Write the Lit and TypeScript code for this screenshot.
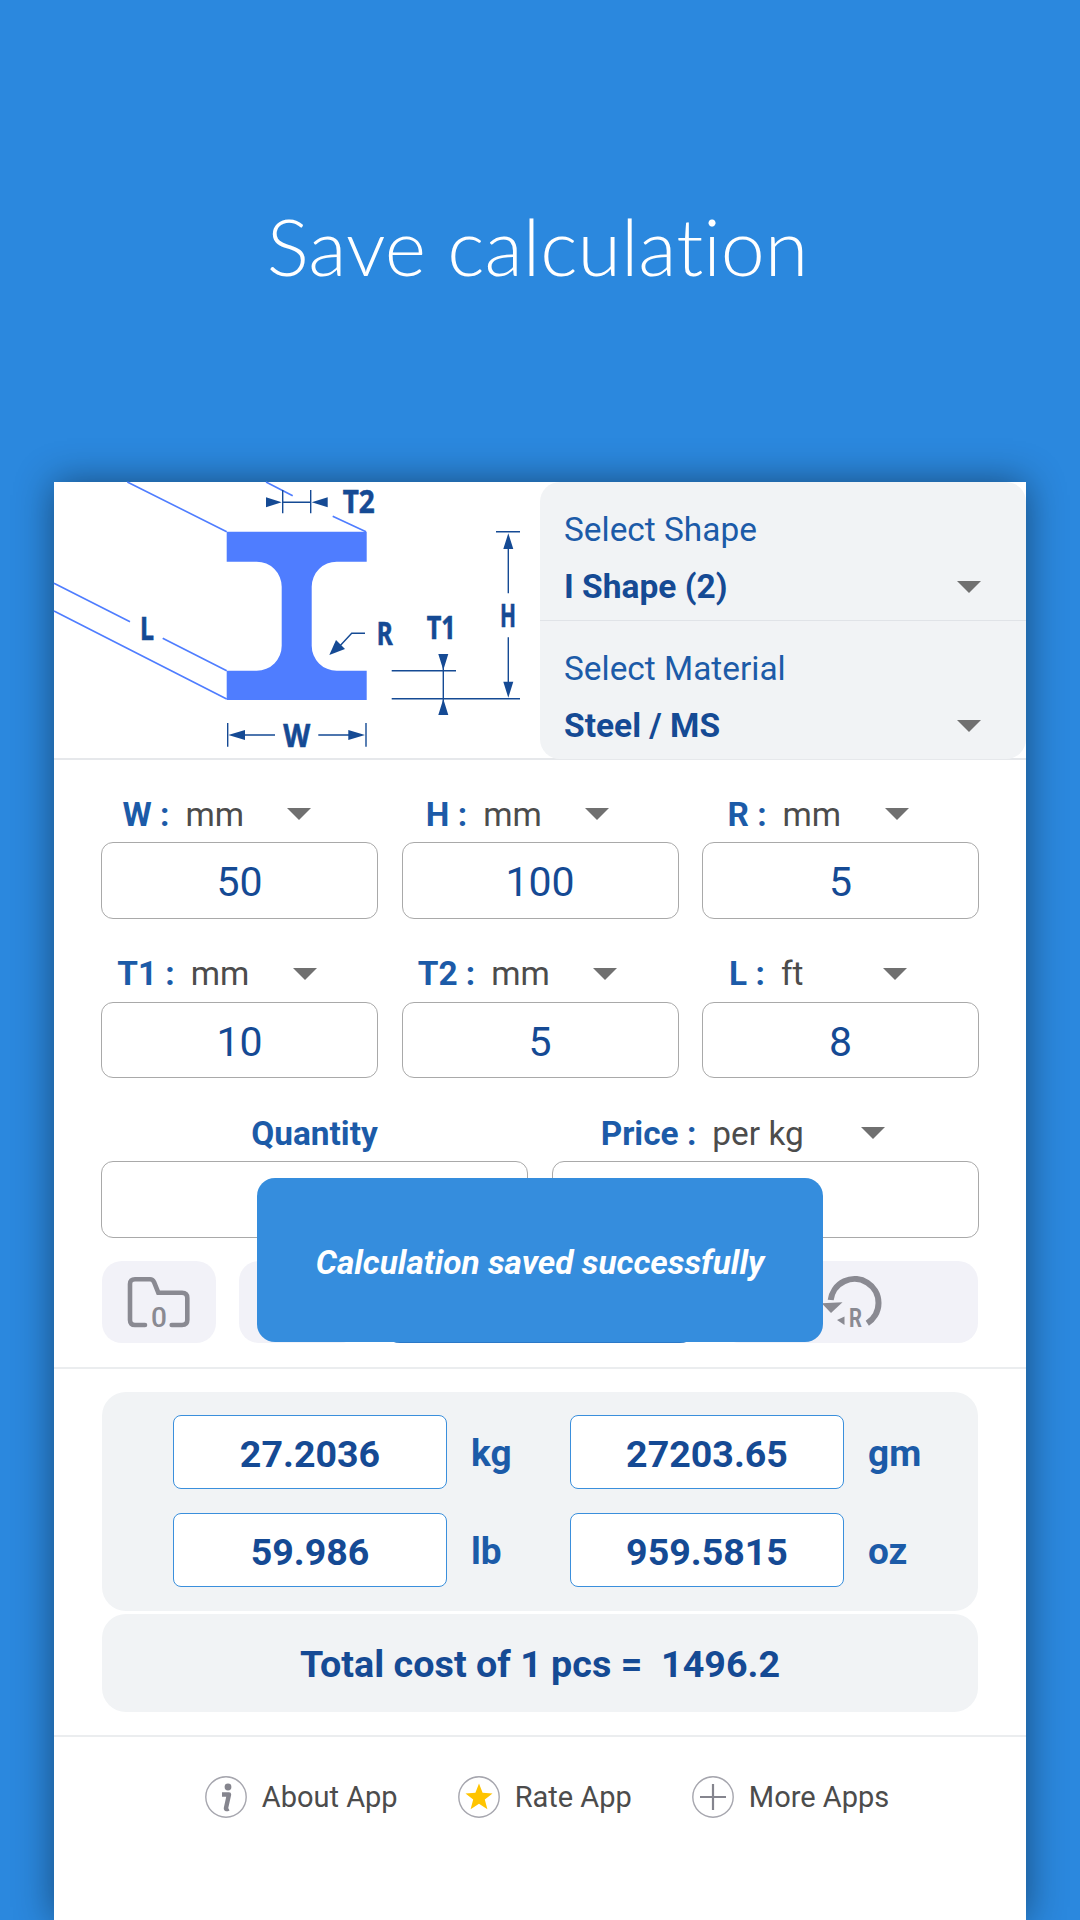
import {html, css, LitElement} from 'lit';
import {customElement} from 'lit/decorators.js';

const dims = [
  {label: 'W', unit: 'mm', value: '50'},
  {label: 'H', unit: 'mm', value: '100'},
  {label: 'R', unit: 'mm', value: '5'},
  {label: 'T1', unit: 'mm', value: '10'},
  {label: 'T2', unit: 'mm', value: '5'},
  {label: 'L', unit: 'ft', value: '8'},
];

const results = [
  {value: '27.2036', unit: 'kg'},
  {value: '27203.65', unit: 'gm'},
  {value: '59.986', unit: 'lb'},
  {value: '959.5815', unit: 'oz'},
];

@customElement('app-root')
export class AppRoot extends LitElement {
  static styles = css`
    :host {
      display: block;
      width: 1080px;
      height: 1920px;
      overflow: hidden;
      background: #2b88de;
      font-family: Roboto, sans-serif;
      color: #154a94;
    }
    .title {
      height: 482px;
      box-sizing: border-box;
      padding: 194px 5px 0 0;
      margin: 0;
      text-align: center;
      color: #fff;
      font-family: Lato, sans-serif;
      font-weight: 300;
      font-size: 79px;
      line-height: 104px;
      font-variant-ligatures: none;
    }
    .card {
      position: relative;
      width: 972px;
      height: 1438px;
      margin-left: 54px;
      background: #fff;
      box-shadow: 0 0 36px rgba(0, 0, 0, 0.45);
    }
    .top {
      display: flex;
      height: 278px;
      box-sizing: border-box;
      border-bottom: 2px solid #e6e8eb;
    }
    .diagram {
      display: block;
      width: 486px;
      height: 276px;
      flex: none;
      overflow: visible;
    }
    .diagram text {
      font-family: 'Noto Sans', sans-serif;
      font-weight: 700;
      fill: #154a94;
      stroke: #154a94;
      stroke-width: 0.6px;
    }
    .selects {
      flex: 1;
      height: 277px;
      background: #f1f3f5;
      border-radius: 20px;
      display: flex;
      flex-direction: column;
    }
    .select {
      height: 138px;
      box-sizing: border-box;
      padding: 26px 45px 0 24px;
    }
    .select + .select {
      flex: 1;
      border-top: 1px solid #e0e3e7;
    }
    .select-label {
      font-size: 33.4px;
      line-height: 44px;
      color: #1c5ba8;
    }
    .select-row {
      display: flex;
      justify-content: space-between;
      align-items: center;
      margin-top: 13px;
      font-size: 33.5px;
      line-height: 44px;
      font-weight: 700;
      color: #154a94;
    }
    .arrow {
      flex: none;
      width: 0;
      height: 0;
      border-left: 12px solid transparent;
      border-right: 12px solid transparent;
      border-top: 12px solid #707070;
    }
    .fields {
      display: grid;
      grid-template-columns: repeat(3, 277px);
      gap: 33px 23.5px;
      padding: 32px 47px 0;
    }
    .wide {
      display: grid;
      grid-template-columns: repeat(2, 427px);
      column-gap: 24px;
      padding: 33px 47px 0;
    }
    .field-label {
      display: flex;
      align-items: center;
      justify-content: center;
      height: 44px;
      padding-right: 45px;
      margin-bottom: 6px;
      font-size: 33.4px;
      font-weight: 700;
      color: #1c5ba8;
    }
    .field-label.plain {
      padding-right: 0;
    }
    .unit {
      width: 102px;
      margin-left: 16px;
      font-weight: 400;
      font-size: 33.4px;
      color: #4c4c4c;
    }
    .unit.long {
      width: 149px;
    }
    .box {
      height: 76.5px;
      box-sizing: border-box;
      padding-top: 2px;
      border: 1px solid #a9a9a9;
      border-radius: 12px;
      background: #fff;
      text-align: center;
      font-size: 41px;
      line-height: 75px;
      color: #154a94;
    }
    .buttons {
      display: flex;
      gap: 20px;
      height: 82px;
      margin-top: 23.5px;
      padding: 0 48px;
    }
    .btn {
      display: flex;
      align-items: center;
      justify-content: center;
      background: #f2f2f8;
      border-radius: 20px;
    }
    .folder {
      width: 114px;
      flex: none;
      margin-right: 3px;
    }
    .other {
      width: 121px;
      flex: none;
    }
    .save {
      width: 320px;
      flex: none;
      background: #2a78c8;
    }
    .reset {
      flex: 1;
      padding-left: 10px;
    }
    .btn svg {
      display: block;
      overflow: visible;
    }
    .btn text {
      font-family: Roboto, sans-serif;
      fill: #8a8a92;
    }
    .output {
      margin-top: 24px;
      padding: 23px 48px 23px;
      border-top: 2px solid #ebedef;
      border-bottom: 2px solid #ebedef;
    }
    .weights {
      display: grid;
      grid-template-columns: 274px 123px 274px 1fr;
      grid-auto-rows: 74px;
      gap: 24px 0;
      align-items: center;
      height: 219px;
      box-sizing: border-box;
      padding: 23px 0 0 71px;
      background: #f1f3f5;
      border-radius: 24px;
    }
    .result {
      height: 74px;
      box-sizing: border-box;
      padding-top: 3px;
      border: 1px solid #3a8fdc;
      border-radius: 8px;
      background: #fff;
      text-align: center;
      font-size: 37.6px;
      font-weight: 700;
      line-height: 70px;
    }
    .weight-unit {
      padding: 2px 0 0 24px;
      font-size: 37px;
      font-weight: 700;
      color: #1c5ba8;
    }
    .total {
      height: 98px;
      margin-top: 3px;
      background: #f1f3f5;
      border-radius: 24px;
      text-align: center;
      font-size: 37.7px;
      font-weight: 700;
      line-height: 101px;
      white-space: pre;
    }
    .footer {
      display: flex;
      justify-content: center;
      align-items: center;
      gap: 60px;
      padding: 39px 0 0 14px;
      font-size: 29px;
      color: #4c4c4c;
    }
    .link {
      display: flex;
      align-items: center;
      gap: 15px;
    }
    .link svg {
      display: block;
    }
    .toast {
      position: absolute;
      left: 203px;
      top: 696px;
      width: 566px;
      height: 164px;
      box-sizing: border-box;
      padding-top: 4px;
      border-radius: 18px;
      background: #358ddd;
      display: flex;
      align-items: center;
      justify-content: center;
      color: #fff;
      font-size: 33.4px;
      font-weight: 700;
      font-style: italic;
    }
  `;

  renderDiagram() {
    return html`
      <svg class="diagram" viewBox="0 0 486 276">
        <g stroke="#4f7dff" stroke-width="1.6" fill="none">
          <path d="M73.3 0L172.7 49.7M212 0L238.7 13.7M278.7 34.3L312 49.7M0 101.3L76 139.7M108.7 156.3L172.7 188.7M0 129L172.7 217"/>
        </g>
        <path fill="#4f7dff" d="M172.7 49.7H312.7V79.7H282.7A25 25 0 0 0 257.7 104.7V163.7A25 25 0 0 0 282.7 188.7H312.7V218H172.7V188.7H202.7A25 25 0 0 0 227.7 163.7V104.7A25 25 0 0 0 202.7 79.7H172.7Z"/>
        <g stroke="#154a94" stroke-width="1.4" fill="none">
          <path d="M228.7 8V31.3M256.7 8V31.3M228.7 20.3H256.7"/>
          <path d="M442 49.7H466M454.3 60V111.3M454.3 155.3V205M337.7 188.7H402M337.7 216.7H466M389.3 178V225"/>
          <path d="M173.7 241V264.7M312 241V264.7M185 253H221M264.3 253H300"/>
          <path d="M311 151.3H297.7L284 166"/>
        </g>
        <g fill="#154a94">
          <path d="M212 15.3L227.7 20.3L212 25.3ZM273.7 15.3L257.7 20.3L273.7 25.3Z"/>
          <path d="M454.3 51.3L449.3 67H459.3ZM454.3 215.7L449.3 199.7H459.3Z"/>
          <path d="M389.3 188L384.3 172H394.3ZM389.3 217L384.3 233H394.3Z"/>
          <path d="M174.3 253L191 248V258ZM311 253L294.3 248V258Z"/>
          <path d="M275.3 173L282 158L291 167Z"/>
        </g>
        <text x="288.7" y="31.3" font-size="32" textLength="32" lengthAdjust="spacingAndGlyphs">T2</text>
        <text x="372.7" y="157" font-size="32" textLength="29" lengthAdjust="spacingAndGlyphs">T1</text>
        <text x="446" y="144.7" font-size="32" textLength="16" lengthAdjust="spacingAndGlyphs">H</text>
        <text x="322.7" y="163" font-size="32" textLength="16" lengthAdjust="spacingAndGlyphs">R</text>
        <text x="86" y="158" font-size="32" textLength="14" lengthAdjust="spacingAndGlyphs">L</text>
        <text x="229.3" y="264.7" font-size="32" textLength="27" lengthAdjust="spacingAndGlyphs">W</text>
      </svg>
    `;
  }

  renderField(d: {label: string; unit: string; value: string}) {
    return html`
      <div>
        <div class="field-label">
          <span>${d.label} :</span>
          <span class="unit">${d.unit}</span>
          <span class="arrow"></span>
        </div>
        <div class="box">${d.value}</div>
      </div>
    `;
  }

  render() {
    return html`
      <h1 class="title">Save calculation</h1>
      <div class="card">
        <div class="top">
          ${this.renderDiagram()}
          <div class="selects">
            <div class="select">
              <div class="select-label">Select Shape</div>
              <div class="select-row"><span>I Shape (2)</span><span class="arrow"></span></div>
            </div>
            <div class="select">
              <div class="select-label">Select Material</div>
              <div class="select-row"><span>Steel / MS</span><span class="arrow"></span></div>
            </div>
          </div>
        </div>

        <div class="fields">${dims.map((d) => this.renderField(d))}</div>

        <div class="wide">
          <div>
            <div class="field-label plain">Quantity</div>
            <div class="box"></div>
          </div>
          <div>
            <div class="field-label">
              <span>Price :</span>
              <span class="unit long">per kg</span>
              <span class="arrow"></span>
            </div>
            <div class="box"></div>
          </div>
        </div>

        <div class="buttons">
          <div class="btn folder">
            <svg width="62" height="51" viewBox="0 0 62 51">
              <path d="M17 48H7Q2 48 2 43V7Q2 2.3 7 2.3H22Q24.7 2.3 26 5L30.3 15.7H54Q59.3 15.7 59.3 21V43Q59.3 48 54 48H43.7" fill="none" stroke="#8a8a92" stroke-width="4.6" stroke-linecap="round"/>
              <text x="31" y="50" font-size="28" font-weight="500" text-anchor="middle">0</text>
            </svg>
          </div>
          <div class="btn other"></div>
          <div class="btn save"></div>
          <div class="btn reset">
            <svg width="60" height="60" viewBox="0 0 60 60">
              <path d="M43.3 51.3A24 24 0 1 0 6.7 28" fill="none" stroke="#8a8a92" stroke-width="6"/>
              <path d="M-2.3 31.3L18.5 30.3L7 41Z" fill="#8a8a92"/>
              <path d="M13 48L20.5 44.5V53Z" fill="#8a8a92"/>
              <text x="25" y="55" font-size="26" font-weight="700" textLength="13" lengthAdjust="spacingAndGlyphs">R</text>
            </svg>
          </div>
        </div>

        <div class="output">
          <div class="weights">
            ${results.map((r) => html`
              <div class="result">${r.value}</div>
              <div class="weight-unit">${r.unit}</div>
            `)}
          </div>
          <div class="total">Total cost of 1 pcs =  1496.2</div>
        </div>

        <div class="footer">
          <div class="link">
            <svg width="42" height="42" viewBox="0 0 42 42">
              <circle cx="21" cy="21" r="20.2" fill="#fff" stroke="#a6a6ae" stroke-width="1.4"/>
              <circle cx="23" cy="11" r="3.4" fill="#85858e"/>
              <path d="M17 18.5H24L21 32Q20.6 34 23.5 32.5" fill="none" stroke="#85858e" stroke-width="4.4" stroke-linejoin="round"/>
            </svg>
            <span>About App</span>
          </div>
          <div class="link">
            <svg width="42" height="42" viewBox="0 0 42 42">
              <circle cx="21" cy="21" r="20.2" fill="#fff" stroke="#a6a6ae" stroke-width="1.4"/>
              <path d="M21 7.5L24.6 16.8L34.5 17.4L26.8 23.6L29.4 33.2L21 27.8L12.6 33.2L15.2 23.6L7.5 17.4L17.4 16.8Z" fill="#ffc400"/>
            </svg>
            <span>Rate App</span>
          </div>
          <div class="link">
            <svg width="42" height="42" viewBox="0 0 42 42">
              <circle cx="21" cy="21" r="20.2" fill="#fff" stroke="#a6a6ae" stroke-width="1.4"/>
              <path d="M21 8V34M8 21H34" stroke="#85858e" stroke-width="2.2"/>
            </svg>
            <span>More Apps</span>
          </div>
        </div>

        <div class="toast">Calculation saved successfully</div>
      </div>
    `;
  }
}
